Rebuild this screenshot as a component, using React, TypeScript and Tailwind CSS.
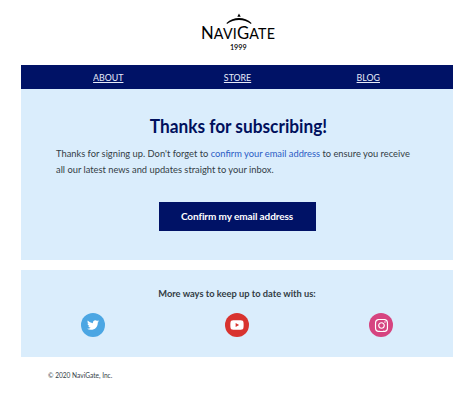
import React from 'react';
import { FaTwitter, FaYoutube, FaInstagram } from 'react-icons/fa';

const navLinks = [
  { label: 'ABOUT', href: '#about' },
  { label: 'STORE', href: '#store' },
  { label: 'BLOG', href: '#blog' }
];

const socialLinks = [
  { icon: <FaTwitter size={12} />, label: 'Twitter', color: 'bg-[#4ba6e3]' },
  { icon: <FaYoutube size={14} />, label: 'YouTube', color: 'bg-[#d8332f]' },
  { icon: <FaInstagram size={15} />, label: 'Instagram', color: 'bg-[#d64480]' }
];

const Logo = () => (
  <div className="flex h-[65px] flex-col items-center pt-[13px] text-black">
    <svg className="ml-[3px]" width="26" height="11" viewBox="0 0 26 11" fill="none">
      <path d="M13 0.4 L14.7 3.7 H11.3 Z" fill="currentColor" />
      <path d="M0.5 10 C7.5 3.2 18.5 3.2 25.5 10 L25 11 C18 5.6 8 5.6 1 11 Z" fill="currentColor" />
    </svg>
    <div className="mt-px ml-[2px] flex scale-x-[0.95] items-baseline whitespace-nowrap leading-4 tracking-[0.2px]">
      <span className="text-[17.5px]">N</span>
      <span className="text-[15px]">AVI</span>
      <span className="text-[17.5px]">G</span>
      <span className="text-[15px]">ATE</span>
    </div>
    <div className="mt-[2px] ml-[2px] scale-x-[0.9] text-[8px] font-semibold leading-[9px]">1999</div>
  </div>
);

const App = () => {
  return (
    <div className="h-[400px] w-[474px] overflow-hidden bg-white px-[21px] font-['Lato','Liberation_Sans',sans-serif] text-[#333d45]">
      <Logo />

      <nav className="grid h-6 grid-cols-3 items-center justify-items-center bg-[#001266] pr-5 pl-[22px] text-[10px] leading-3 text-[#e8ecfa]">
        {navLinks.map((link) => (
          <a key={link.label} href={link.href} className="scale-x-[0.88] underline">
            {link.label}
          </a>
        ))}
      </nav>

      <main className="flex h-[171px] flex-col items-center bg-[#daedfc] pt-[26px]">
        <h1 className="ml-[2px] scale-x-[0.96] whitespace-nowrap text-[18px] font-bold leading-[22px] text-[#00105c]">
          Thanks for subscribing!
        </h1>
        <div className="mt-2 w-full origin-left translate-x-[35px] scale-x-[0.932] whitespace-nowrap text-[10px] leading-4">
          <p>
            Thanks for signing up. Don't forget to{' '}
            <a href="#confirm" className="text-[#2a5cc4]">confirm your email address</a> to ensure you receive
          </p>
          <p>all our latest news and updates straight to your inbox.</p>
        </div>
        <a
          href="#confirm"
          className="mt-[25px] flex h-[29px] w-[157px] items-center justify-center whitespace-nowrap bg-[#001266] text-[10px] font-bold tracking-[-0.1px] text-white"
        >
          Confirm my email address
        </a>
      </main>

      <section className="mt-[10px] h-[87px] bg-[#daedfc] pt-4">
        <h2 className="scale-x-[0.93] text-center text-[10px] font-bold leading-[14px]">
          More ways to keep up to date with us:
        </h2>
        <div className="mt-[13px] grid grid-cols-3 justify-items-center">
          {socialLinks.map((social) => (
            <a
              key={social.label}
              href="#social"
              aria-label={social.label}
              className={`flex size-6 items-center justify-center rounded-full text-white ${social.color}`}
            >
              {social.icon}
            </a>
          ))}
        </div>
      </section>

      <footer className="origin-left translate-x-[27px] scale-x-[0.94] pt-3 text-[7px] leading-3">
        &copy; 2020 NaviGate, Inc.
      </footer>
    </div>
  );
};

export default App;
